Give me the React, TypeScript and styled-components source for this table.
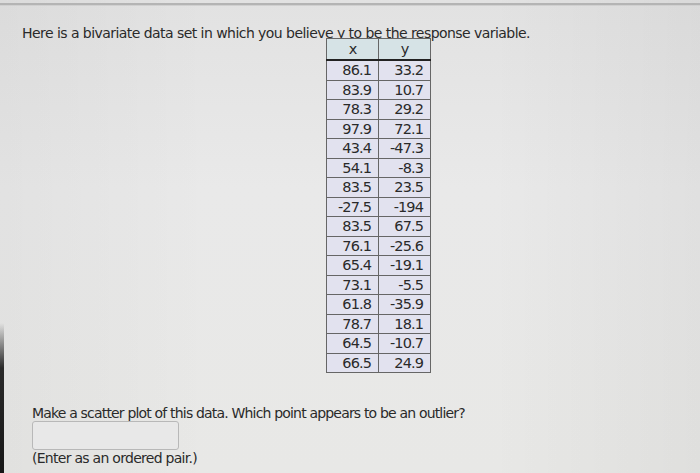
import React from 'react';
import styled, { createGlobalStyle } from 'styled-components';

const GlobalStyle = createGlobalStyle`
  html, body {
    margin: 0;
    padding: 0;
  }
  body {
    width: 700px;
    height: 473px;
    overflow: hidden;
    background: #e4e4e4;
  }
`;

const rows: [string, string][] = [
  ['86.1', '33.2'],
  ['83.9', '10.7'],
  ['78.3', '29.2'],
  ['97.9', '72.1'],
  ['43.4', '-47.3'],
  ['54.1', '-8.3'],
  ['83.5', '23.5'],
  ['-27.5', '-194'],
  ['83.5', '67.5'],
  ['76.1', '-25.6'],
  ['65.4', '-19.1'],
  ['73.1', '-5.5'],
  ['61.8', '-35.9'],
  ['78.7', '18.1'],
  ['64.5', '-10.7'],
  ['66.5', '24.9'],
];

const Screen = styled.div`
  width: 700px;
  height: 473px;
  box-sizing: border-box;
  background:
    linear-gradient(180deg, rgba(20, 20, 20, 0) 0%, #2a2a2a 30%, #161616 100%) left bottom / 4px 150px no-repeat,
    linear-gradient(90deg, rgba(0, 0, 0, 0.03) 0%, rgba(255, 255, 255, 0) 30%, rgba(255, 255, 255, 0) 70%, rgba(0, 0, 0, 0.04) 100%),
    linear-gradient(180deg, #e2e2e2 0%, #e9e9e9 40%, #e8e8e6 100%);
  font-family: 'DejaVu Sans', Verdana, sans-serif;
  color: #2a2a2a;
  display: flex;
  flex-direction: column;
`;

const TopRule = styled.div`
  height: 2px;
  margin-top: 3px;
  background: #b4b4b4;
  border-bottom: 1px solid #d0d0d0;
`;

const Content = styled.div`
  padding: 18px 0 0 22px;
  display: flex;
  flex-direction: column;
`;

const Prompt = styled.p`
  margin: 0;
  font-size: 14px;
  letter-spacing: -0.55px;
  line-height: 18px;
`;

const TableWrap = styled.div`
  padding-left: 304px;
  margin-top: -4px;
`;

const DataTable = styled.table`
  border-collapse: collapse;
  border: 1px solid #555;
  font-size: 14.5px;
  letter-spacing: -0.9px;
`;

const HeadCell = styled.th`
  width: 51px;
  height: 20px;
  padding: 0;
  font-weight: normal;
  text-align: center;
  background: #d6e3e6;
  border: 1px solid #666;
  border-bottom: 2px solid #222;
  color: #2a2a2a;
`;

const Cell = styled.td`
  height: 18.5px;
  padding: 0 7px 0 0;
  text-align: right;
  background: #e2e2ef;
  border: 1px solid #666;
  color: #2a2a2a;
  line-height: 18px;
`;

const Question = styled.p`
  margin: 31px 0 0 10px;
  font-size: 14px;
  letter-spacing: -0.82px;
  line-height: 18px;
`;

const AnswerBox = styled.input`
  margin: -1px 0 0 10px;
  width: 147px;
  height: 29px;
  box-sizing: border-box;
  border: 1px solid #b8b8b8;
  border-radius: 3px;
  background: #e8e8e8;
`;

const Hint = styled.p`
  margin: -1px 0 0 10px;
  font-size: 14px;
  letter-spacing: -0.72px;
  line-height: 18px;
`;

export default function App() {
  return (
    <>
      <GlobalStyle />
      <Screen>
        <TopRule />
        <Content>
          <Prompt>Here is a bivariate data set in which you believe y to be the response variable.</Prompt>
          <TableWrap>
            <DataTable>
              <thead>
                <tr>
                  <HeadCell>x</HeadCell>
                  <HeadCell>y</HeadCell>
                </tr>
              </thead>
              <tbody>
                {rows.map(([x, y], i) => (
                  <tr key={i}>
                    <Cell>{x}</Cell>
                    <Cell>{y}</Cell>
                  </tr>
                ))}
              </tbody>
            </DataTable>
          </TableWrap>
          <Question>Make a scatter plot of this data. Which point appears to be an outlier?</Question>
          <AnswerBox type="text" aria-label="outlier" />
          <Hint>(Enter as an ordered pair.)</Hint>
        </Content>
      </Screen>
    </>
  );
}
